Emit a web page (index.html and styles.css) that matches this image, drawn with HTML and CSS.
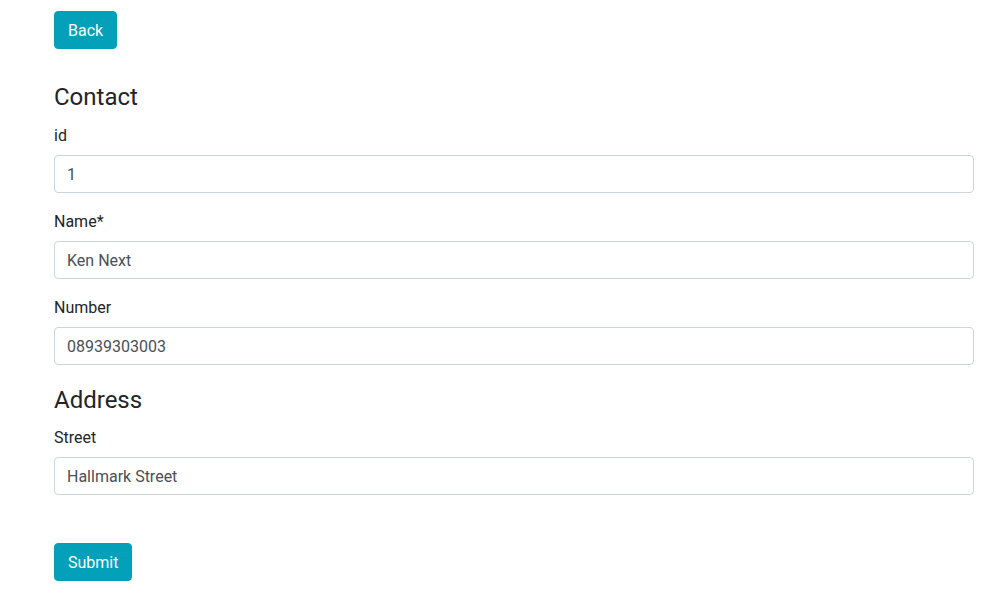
FILE: index.html
```html
<!DOCTYPE html>
<html>
<head>
<meta charset="utf-8">
<link rel="stylesheet" href="styles.css">
</head>
<body>
<div class="page">
  <div class="top"><button class="btn">Back</button></div>
  <h4 class="heading first">Contact</h4>
  <div class="group">
    <label class="label">id</label>
    <input class="input" value="1">
  </div>
  <div class="group">
    <label class="label">Name*</label>
    <input class="input" value="Ken Next">
  </div>
  <div class="group">
    <label class="label">Number</label>
    <input class="input" value="08939303003">
  </div>
  <h4 class="heading">Address</h4>
  <div class="group">
    <label class="label">Street</label>
    <input class="input" value="Hallmark Street">
  </div>
  <div class="actions"><button class="btn">Submit</button></div>
</div>
</body>
</html>
```
FILE: styles.css
```css
* { box-sizing: border-box; }
html, body { margin: 0; padding: 0; background: #fff; }
body {
  font-family: Roboto, "Liberation Sans", sans-serif;
  font-size: 16px;
  line-height: 1.5;
  color: #212529;
}
.page {
  padding: 11px 21px 0 54px;
}
.top { margin-bottom: 34px; }
.btn {
  display: inline-block;
  font-family: inherit;
  font-size: 16px;
  line-height: 24px;
  padding: 7px 13px 5px;
  color: #fff;
  background: #03a0b9;
  border: 1px solid #03a0b9;
  border-radius: 4px;
  cursor: pointer;
}
.heading {
  font-size: 24px;
  font-weight: 400;
  line-height: 1.2;
  margin: 0 0 11px;
}
.heading:not(.first) { margin-top: 21px; margin-bottom: 10px; }
.group { margin-bottom: 16px; }
.group:has(+ .heading) { margin-bottom: 0; }
.label {
  display: block;
  padding-top: 1px;
  margin-bottom: 7px;
  line-height: 24px;
}
.input {
  display: block;
  width: 100%;
  height: 38px;
  padding: 7px 12px 5px;
  font-family: inherit;
  font-size: 16px;
  line-height: 24px;
  color: #495057;
  background: #fff;
  border: 1px solid #ced4da;
  border-radius: 4px;
}
.actions { margin-top: 48px; }
.group:has(+ .actions) { margin-bottom: 0; }
```
